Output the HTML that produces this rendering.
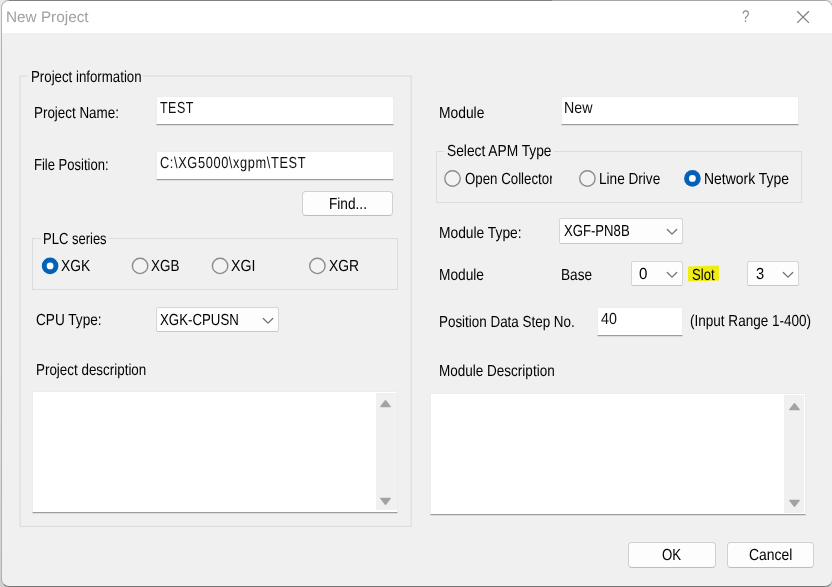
<!DOCTYPE html>
<html><head><meta charset="utf-8"><title>New Project</title>
<style>
html,body{margin:0;padding:0}
body{width:832px;height:587px;overflow:hidden;background:linear-gradient(#ebebeb,#e4e4e4 60%,#cfcfcf);position:relative;font-family:"Liberation Sans",Arial,sans-serif}
#win{position:absolute;left:1px;top:0;width:832px;height:587px;box-sizing:border-box;border:1px solid #b2b2b2;border-top-color:#a8a8a8;border-bottom-color:#777;border-radius:8px;background:#f0f0f0;overflow:hidden}
#tb{position:absolute;left:0;top:0;width:100%;height:32px;background:#fff}
#topl{position:absolute;left:9px;top:0;width:543px;height:1px;background:#808080}
#c{position:absolute;left:0;top:0;width:832px;height:587px;text-rendering:geometricPrecision;will-change:transform}
.t{position:absolute;white-space:nowrap;transform-origin:0 0;line-height:20px;display:block}
.gb{position:absolute;box-sizing:border-box;border:1px solid #dcdcdc}
.gap{position:absolute;background:#f0f0f0;height:3px}
.inp{position:absolute;box-sizing:border-box;background:#fff;border:1px solid #ececec;border-bottom:1px solid #9c9c9c;border-radius:2px 2px 1px 1px;box-shadow:0 1px 0 #dcdcdc}
.cmb{position:absolute;box-sizing:border-box;background:#fdfdfd;border:1px solid #d6d6d6;border-bottom-color:#c6c6c6;border-radius:2.5px}
.btn{position:absolute;box-sizing:border-box;background:#fdfdfd;border:1px solid #d0d0d0;border-bottom-color:#bdbdbd;border-radius:4px}
.rad{position:absolute;box-sizing:border-box;width:16.5px;height:16.5px;border-radius:50%;border:1.3px solid #8e8e8e;background:#f3f3f3}
.rad.sel{border:none;background:#0563bb}
.rad.sel i{position:absolute;left:4.9px;top:4.9px;width:6.7px;height:6.7px;border-radius:50%;background:#fff}
.chev{position:absolute;overflow:visible}
.sb{position:absolute;background:#f0f0f0}
.hl{position:absolute;background:#efec16}
</style></head><body>
<div id="win"><div id="tb"></div></div><div id="topl"></div>
<div id="c">
<svg class="chev" style="left:797px;top:11px" width="12" height="12" viewBox="0 0 12 12"><path d="M0.2 0.2 L11.9 11.9 M11.9 0.2 L0.2 11.9" stroke="#808080" stroke-width="1.25" fill="none"/></svg>

<svg class="chev" style="left:0;top:0" width="832" height="587" viewBox="0 0 832 587"><rect x="20.05" y="76.05" width="391.15" height="450.3" fill="none" stroke="#d9d9d9" stroke-width="1"/></svg>
<div class="gap" style="left:28px;top:74px;width:114.5px;height:4px"></div>
<div class="gb" style="left:32px;top:238px;width:366px;height:52px"></div>
<div class="gap" style="left:41px;top:237px;width:68px"></div>
<div class="gb" style="left:436px;top:151px;width:366px;height:52px"></div>
<div class="gap" style="left:444px;top:150px;width:110px"></div>

<div class="inp" style="left:156px;top:96px;width:238px;height:29px"></div>
<div class="inp" style="left:156px;top:151px;width:238px;height:29px"></div>
<div class="inp" style="left:561px;top:96px;width:238px;height:29px"></div>
<div class="inp" style="left:597px;top:307px;width:86px;height:29px"></div>

<div class="btn" style="left:302px;top:191px;width:91px;height:25px"></div>
<div class="btn" style="left:628px;top:542px;width:88px;height:26px"></div>
<div class="btn" style="left:727px;top:542px;width:87px;height:26px"></div>

<div class="cmb" style="left:156px;top:307px;width:123px;height:25px"></div><svg class="chev" style="left:262px;top:317px" width="12" height="8" viewBox="0 0 12 8"><path d="M1.3 1.5 L6 6.1 L10.7 1.5" fill="none" stroke="#6e6e6e" stroke-width="1.2" stroke-linecap="round" stroke-linejoin="round"/></svg>
<div class="cmb" style="left:559px;top:218px;width:124px;height:26px"></div><svg class="chev" style="left:666px;top:228px" width="12" height="8" viewBox="0 0 12 8"><path d="M1.3 1.5 L6 6.1 L10.7 1.5" fill="none" stroke="#6e6e6e" stroke-width="1.2" stroke-linecap="round" stroke-linejoin="round"/></svg>
<div class="cmb" style="left:631px;top:261px;width:51.5px;height:25px"></div><svg class="chev" style="left:666px;top:270.5px" width="12" height="8" viewBox="0 0 12 8"><path d="M1.3 1.5 L6 6.1 L10.7 1.5" fill="none" stroke="#6e6e6e" stroke-width="1.2" stroke-linecap="round" stroke-linejoin="round"/></svg>
<div class="cmb" style="left:747px;top:261px;width:52px;height:25px"></div><svg class="chev" style="left:782px;top:270.5px" width="12" height="8" viewBox="0 0 12 8"><path d="M1.3 1.5 L6 6.1 L10.7 1.5" fill="none" stroke="#6e6e6e" stroke-width="1.2" stroke-linecap="round" stroke-linejoin="round"/></svg>

<div class="hl" style="left:688px;top:266.3px;width:31.2px;height:14.7px;transform:skewY(-2deg)"></div>

<svg class="chev" style="left:40px;top:256px" width="20" height="20" viewBox="0 0 20 20"><circle cx="10.10" cy="9.90" r="8.3" fill="#0461b8"/><circle cx="10.10" cy="9.90" r="3.4" fill="#fff"/></svg><svg class="chev" style="left:130px;top:256px" width="20" height="20" viewBox="0 0 20 20"><circle cx="10.10" cy="9.90" r="7.7" fill="#f3f3f3" stroke="#8c8c8c" stroke-width="1.4"/></svg><svg class="chev" style="left:210px;top:256px" width="20" height="20" viewBox="0 0 20 20"><circle cx="10.10" cy="9.90" r="7.7" fill="#f3f3f3" stroke="#8c8c8c" stroke-width="1.4"/></svg><svg class="chev" style="left:307px;top:256px" width="20" height="20" viewBox="0 0 20 20"><circle cx="10.40" cy="9.90" r="7.7" fill="#f3f3f3" stroke="#8c8c8c" stroke-width="1.4"/></svg>
<svg class="chev" style="left:442px;top:168px" width="20" height="20" viewBox="0 0 20 20"><circle cx="10.50" cy="10.50" r="7.7" fill="#f3f3f3" stroke="#8c8c8c" stroke-width="1.4"/></svg><svg class="chev" style="left:577px;top:168px" width="20" height="20" viewBox="0 0 20 20"><circle cx="10.40" cy="10.50" r="7.7" fill="#f3f3f3" stroke="#8c8c8c" stroke-width="1.4"/></svg><svg class="chev" style="left:682px;top:168px" width="20" height="20" viewBox="0 0 20 20"><circle cx="10.40" cy="10.40" r="8.3" fill="#0461b8"/><circle cx="10.40" cy="10.40" r="3.4" fill="#fff"/></svg>

<div class="inp" style="left:32px;top:391px;width:366px;height:122px"></div>
<div class="sb" style="left:376px;top:393px;width:21px;height:117px"></div><svg class="chev" style="left:380.3px;top:400.3px" width="11" height="8" viewBox="0 0 11 8"><path d="M5.5 0.8 L10.2 6.6 L0.8 6.6 Z" fill="#a3a3a3" stroke="#a3a3a3" stroke-width="1.4" stroke-linejoin="round"/></svg><svg class="chev" style="left:380.3px;top:496.5px" width="11" height="8" viewBox="0 0 11 8"><path d="M0.8 1.4 L10.2 1.4 L5.5 7.2 Z" fill="#a3a3a3" stroke="#a3a3a3" stroke-width="1.4" stroke-linejoin="round"/></svg>
<div class="inp" style="left:430px;top:393px;width:376px;height:122px"></div>
<div class="sb" style="left:784px;top:395px;width:20px;height:118px"></div><svg class="chev" style="left:788.6px;top:403px" width="11" height="8" viewBox="0 0 11 8"><path d="M5.5 0.8 L10.2 6.6 L0.8 6.6 Z" fill="#a3a3a3" stroke="#a3a3a3" stroke-width="1.4" stroke-linejoin="round"/></svg><svg class="chev" style="left:788.6px;top:498.5px" width="11" height="8" viewBox="0 0 11 8"><path d="M0.8 1.4 L10.2 1.4 L5.5 7.2 Z" fill="#a3a3a3" stroke="#a3a3a3" stroke-width="1.4" stroke-linejoin="round"/></svg>

<span class="t" style="left:5.64px;top:7.80px;font-size:15.2px;color:#a0a0a0;transform:scaleX(1.0087)">New Project</span>
<span class="t" style="left:742.11px;top:7.20px;font-size:17px;color:#909090;transform:scaleX(0.7877)">?</span>
<span class="t" style="left:30.56px;top:67.50px;font-size:16px;color:#000;transform:scaleX(0.8290)">Project information</span>
<span class="t" style="left:34.05px;top:103.80px;font-size:16px;color:#000;transform:scaleX(0.8376)">Project Name:</span>
<span class="t" style="left:34.08px;top:156.00px;font-size:16px;color:#000;transform:scaleX(0.8146)">File Position:</span>
<span class="t" style="left:328.63px;top:195.00px;font-size:16px;color:#000;transform:scaleX(0.8529)">Find...</span>
<span class="t" style="left:42.88px;top:230.00px;font-size:16px;color:#000;transform:scaleX(0.8131)">PLC series</span>
<span class="t" style="left:61.18px;top:257.00px;font-size:16px;color:#000;transform:scaleX(0.8634)">XGK</span>
<span class="t" style="left:151.19px;top:257.00px;font-size:16px;color:#000;transform:scaleX(0.8398)">XGB</span>
<span class="t" style="left:230.97px;top:257.00px;font-size:16px;color:#000;transform:scaleX(0.8854)">XGI</span>
<span class="t" style="left:328.68px;top:257.00px;font-size:16px;color:#000;transform:scaleX(0.8657)">XGR</span>
<span class="t" style="left:35.96px;top:311.30px;font-size:16px;color:#000;transform:scaleX(0.8508)">CPU Type:</span>
<span class="t" style="left:159.79px;top:311.00px;font-size:16px;color:#000;transform:scaleX(0.8289)">XGK-CPUSN</span>
<span class="t" style="left:35.55px;top:360.80px;font-size:16px;color:#000;transform:scaleX(0.8379)">Project description</span>
<span class="t" style="left:438.91px;top:103.80px;font-size:16px;color:#000;transform:scaleX(0.8635)">Module</span>
<span class="t" style="left:447.06px;top:142.40px;font-size:16px;color:#000;transform:scaleX(0.8599)">Select APM Type</span>
<span class="t" style="left:598.93px;top:169.75px;font-size:16px;color:#000;transform:scaleX(0.8501)">Line Drive</span>
<span class="t" style="left:703.80px;top:169.75px;font-size:16px;color:#000;transform:scaleX(0.8713)">Network Type</span>
<span class="t" style="left:439.01px;top:223.80px;font-size:16px;color:#000;transform:scaleX(0.8624)">Module Type:</span>
<span class="t" style="left:563.89px;top:222.00px;font-size:16px;color:#000;transform:scaleX(0.8203)">XGF-PN8B</span>
<span class="t" style="left:439.02px;top:266.30px;font-size:16px;color:#000;transform:scaleX(0.8576)">Module</span>
<span class="t" style="left:560.73px;top:266.00px;font-size:16px;color:#000;transform:scaleX(0.8524)">Base</span>
<span class="t" style="left:639.41px;top:264.80px;font-size:16px;color:#000;transform:scaleX(0.9443)">0</span>
<span class="t" style="left:691.99px;top:266.30px;font-size:16px;color:#000;transform:scaleX(0.8187)">Slot</span>
<span class="t" style="left:756.03px;top:264.50px;font-size:16px;color:#000;transform:scaleX(0.9180)">3</span>
<span class="t" style="left:438.95px;top:312.50px;font-size:16px;color:#000;transform:scaleX(0.8384)">Position Data Step No.</span>
<span class="t" style="left:690.40px;top:312.00px;font-size:16px;color:#000;transform:scaleX(0.8457)">(Input Range 1-400)</span>
<span class="t" style="left:438.94px;top:361.50px;font-size:16px;color:#000;transform:scaleX(0.8446)">Module Description</span>
<span class="t" style="left:661.98px;top:546.40px;font-size:16px;color:#000;transform:scaleX(0.8271)">OK</span>
<span class="t" style="left:749.24px;top:546.30px;font-size:16px;color:#000;transform:scaleX(0.8689)">Cancel</span>
<span class="t" style="left:160.31px;top:99.00px;font-size:16px;color:#111;letter-spacing:0.60px;transform:scaleX(0.7800)">TEST</span>
<span class="t" style="left:159.50px;top:154.00px;font-size:16px;color:#111;letter-spacing:0.77px;transform:scaleX(0.8000)">C:\XG5000\xgpm\TEST</span>
<span class="t" style="left:563.88px;top:98.80px;font-size:16px;color:#111;transform:scaleX(0.8882)">New</span>
<span class="t" style="left:601.27px;top:310.10px;font-size:16px;color:#111;transform:scaleX(0.8896)">40</span>
<div style="position:absolute;left:0;top:160px;width:551.7px;height:40px;overflow:hidden"><span class="t" style="left:464.58px;top:9.75px;font-size:16px;color:#000;transform:scaleX(0.8303)">Open Collector</span></div>
</div>
</body></html>
